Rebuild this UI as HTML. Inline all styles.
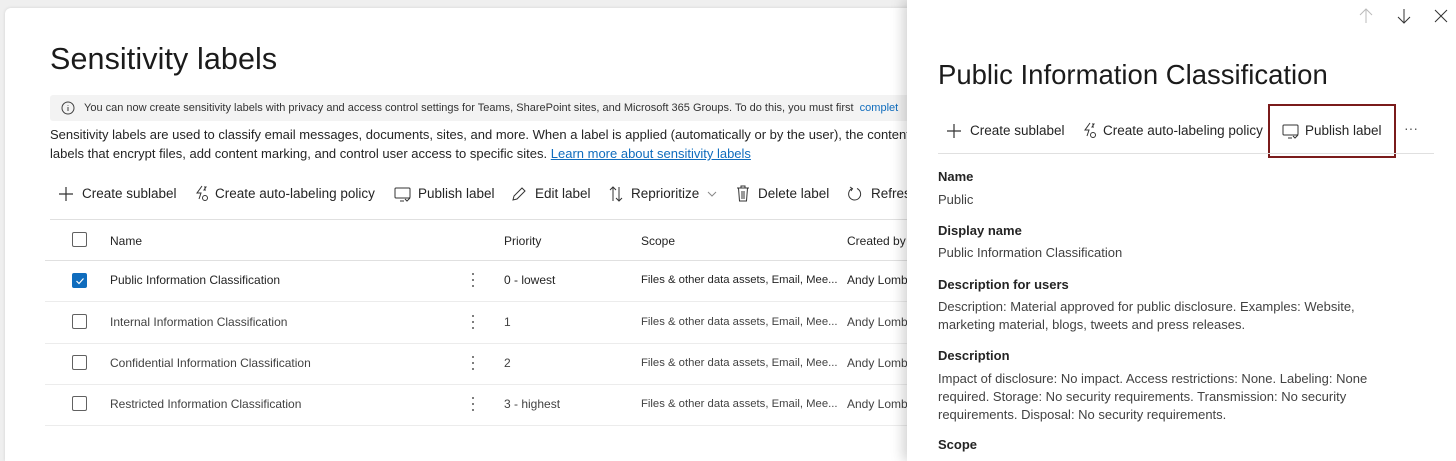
<!DOCTYPE html>
<html><head><meta charset="utf-8"><style>
*{margin:0;padding:0;box-sizing:border-box}
html,body{width:1456px;height:461px;overflow:hidden}
body{background:#efefef;font-family:"Liberation Sans",sans-serif;color:#242424;position:relative}
.a{position:absolute;white-space:nowrap}
.card{position:absolute;left:5px;top:8px;width:1000px;height:453px;background:#fff;border-radius:6px 6px 0 0;box-shadow:0 0 3px rgba(0,0,0,.12)}
.panel{position:absolute;left:907px;top:0;width:549px;height:461px;background:#fff;box-shadow:-4px 0 12px rgba(0,0,0,.18)}
.tb{font-size:13.5px;color:#242424}
.cb{position:absolute;width:15px;height:15px;border:1px solid #616161;border-radius:2px;background:#fff}
.cell{font-size:12px;color:#424242}
.sc{font-size:11.3px;margin-top:1px}
.hr{position:absolute;height:1px;background:#e0e0e0}
.k{position:absolute;width:2px;height:2px;background:#555;border-radius:1px}
svg{position:absolute}
.lbl{font-size:13px;font-weight:bold;color:#242424}
.val{font-size:13px;color:#424242}
</style></head><body>
<div class="card"></div>
<div class="a" style="left:50px;top:42px;font-size:30.5px;color:#1b1b1b;letter-spacing:0.1px">Sensitivity labels</div>
<div class="a" style="left:50px;top:95px;width:860px;height:26px;background:#f3f3f3;border-radius:3px"></div>
<svg style="left:61px;top:101px" width="14" height="14" viewBox="0 0 14 14"><circle cx="7" cy="7" r="6" fill="none" stroke="#424242"/><path d="M7 6v4M7 4v.6" stroke="#424242"/></svg>
<div class="a" style="left:84px;top:102px;font-size:11px;color:#333">You can now create sensitivity labels with privacy and access control settings for Teams, SharePoint sites, and Microsoft 365 Groups. To do this, you must first&nbsp; <span style="color:#0f6cbd">complet</span></div>
<div class="a" style="left:50px;top:125px;font-size:13px;color:#242424;line-height:19px;width:857px;overflow:hidden">Sensitivity labels are used to classify email messages, documents, sites, and more. When a label is applied (automatically or by the user), the content<br>labels that encrypt files, add content marking, and control user access to specific sites. <span style="color:#0f6cbd;text-decoration:underline">Learn more about sensitivity labels</span></div>
<!-- toolbar -->
<svg style="left:58px;top:186px" width="16" height="16"><path d="M8 1v14M1 8h14" stroke="#333" stroke-width="1.2"/></svg>
<div class="a tb" style="left:82px;top:186px">Create sublabel</div>
<svg style="left:193px;top:185px" width="16" height="18"><path d="M9 1L4 8h4l-2 6M11 2l2 0-2 3h2" stroke="#333" fill="none"/><circle cx="12" cy="13" r="2.5" fill="none" stroke="#333"/></svg>
<div class="a tb" style="left:215px;top:186px">Create auto-labeling policy</div>
<svg style="left:394px;top:187px" width="17" height="15"><rect x="1" y="1" width="15" height="10" rx="1" fill="none" stroke="#333"/><path d="M6 14h4M11 12l2 2 3-3" stroke="#333" fill="none"/></svg>
<div class="a tb" style="left:418px;top:186px">Publish label</div>
<svg style="left:511px;top:186px" width="16" height="16"><path d="M2 14l1-4 8-8 3 3-8 8z" stroke="#333" fill="none"/></svg>
<div class="a tb" style="left:535px;top:186px">Edit label</div>
<svg style="left:608px;top:185px" width="16" height="18"><path d="M5 16V2M2 5l3-3 3 3M11 2v14M8 13l3 3 3-3" stroke="#333" fill="none"/></svg>
<div class="a tb" style="left:631px;top:186px">Reprioritize</div>
<svg style="left:707px;top:190px" width="10" height="8"><path d="M1 2l4 4 4-4" stroke="#888" fill="none"/></svg>
<svg style="left:736px;top:185px" width="14" height="17"><path d="M1 3h12M5 3V1h4v2M2.5 3l1 13h7l1-13M6 6v8M8 6v8" stroke="#333" fill="none"/></svg>
<div class="a tb" style="left:758px;top:186px">Delete label</div>
<svg style="left:847px;top:186px" width="16" height="16"><path d="M10 2.5A6 6 0 1 1 5 2.6" stroke="#333" fill="none"/><path d="M3 1l2.5 1.6L4 5" stroke="#333" fill="none"/></svg>
<div class="a tb" style="left:871px;top:186px">Refres</div>
<div class="hr" style="left:50px;top:219px;width:857px"></div>
<!-- table -->
<div class="cb" style="left:72px;top:232px"></div>
<div class="a cell" style="left:110px;top:234px;color:#242424">Name</div>
<div class="a cell" style="left:504px;top:234px;color:#242424">Priority</div>
<div class="a cell" style="left:641px;top:234px;color:#242424">Scope</div>
<div class="a cell" style="left:847px;top:234px;color:#242424">Created by</div>
<div class="hr" style="left:45px;top:260px;width:862px"></div>

<div class="cb" style="left:72px;top:273px;background:#0f6cbd;border-color:#0f6cbd"></div>
<svg style="left:75px;top:276px" width="10" height="10"><path d="M1.5 5l2.5 2.5 4.5-5" stroke="#fff" fill="none" stroke-width="1.2"/></svg>
<div class="a cell" style="left:110px;top:273px;color:#242424">Public Information Classification</div>
<div class="k" style="left:472px;top:273px"></div><div class="k" style="left:472px;top:279px"></div><div class="k" style="left:472px;top:285px"></div>
<div class="a cell" style="left:504px;top:273px;color:#242424">0 - lowest</div>
<div class="a cell sc" style="left:641px;top:273px;color:#242424">Files &amp; other data assets, Email, Mee...</div>
<div class="a cell" style="left:847px;top:273px;color:#242424">Andy Lomba</div>
<div class="hr" style="left:45px;top:301px;width:862px;background:#ececec"></div>

<div class="cb" style="left:72px;top:314px"></div>
<div class="a cell" style="left:110px;top:315px">Internal Information Classification</div>
<div class="k" style="left:472px;top:315px"></div><div class="k" style="left:472px;top:321px"></div><div class="k" style="left:472px;top:327px"></div>
<div class="a cell" style="left:504px;top:315px">1</div>
<div class="a cell sc" style="left:641px;top:315px">Files &amp; other data assets, Email, Mee...</div>
<div class="a cell" style="left:847px;top:315px">Andy Lomba</div>
<div class="hr" style="left:45px;top:343px;width:862px;background:#ececec"></div>

<div class="cb" style="left:72px;top:355px"></div>
<div class="a cell" style="left:110px;top:356px">Confidential Information Classification</div>
<div class="k" style="left:472px;top:356px"></div><div class="k" style="left:472px;top:362px"></div><div class="k" style="left:472px;top:368px"></div>
<div class="a cell" style="left:504px;top:356px">2</div>
<div class="a cell sc" style="left:641px;top:356px">Files &amp; other data assets, Email, Mee...</div>
<div class="a cell" style="left:847px;top:356px">Andy Lomba</div>
<div class="hr" style="left:45px;top:384px;width:862px;background:#ececec"></div>

<div class="cb" style="left:72px;top:396px"></div>
<div class="a cell" style="left:110px;top:397px">Restricted Information Classification</div>
<div class="k" style="left:472px;top:397px"></div><div class="k" style="left:472px;top:403px"></div><div class="k" style="left:472px;top:409px"></div>
<div class="a cell" style="left:504px;top:397px">3 - highest</div>
<div class="a cell sc" style="left:641px;top:397px">Files &amp; other data assets, Email, Mee...</div>
<div class="a cell" style="left:847px;top:397px">Andy Lomba</div>
<div class="hr" style="left:45px;top:425px;width:862px;background:#ececec"></div>

<!-- panel -->
<div class="panel"></div>
<svg style="left:1358px;top:8px" width="16" height="16"><path d="M8 15V1M2 7l6-6 6 6" stroke="#bbb" fill="none"/></svg>
<svg style="left:1396px;top:8px" width="16" height="16"><path d="M8 1v14M2 9l6 6 6-6" stroke="#333" fill="none"/></svg>
<svg style="left:1434px;top:9px" width="14" height="14"><path d="M1 1l12 12M13 1L1 13" stroke="#333"/></svg>
<div class="a" style="left:938px;top:59px;font-size:27.5px;color:#1b1b1b">Public Information Classification</div>
<svg style="left:946px;top:123px" width="16" height="16"><path d="M8 1v14M1 8h14" stroke="#333" stroke-width="1.2"/></svg>
<div class="a tb" style="left:970px;top:123px">Create sublabel</div>
<svg style="left:1081px;top:122px" width="16" height="18"><path d="M9 1L4 8h4l-2 6M11 2l2 0-2 3h2" stroke="#333" fill="none"/><circle cx="12" cy="13" r="2.5" fill="none" stroke="#333"/></svg>
<div class="a tb" style="left:1103px;top:123px">Create auto-labeling policy</div>
<div class="a" style="left:1268px;top:104px;width:128px;height:54px;border:2px solid #7a1b1b"></div>
<svg style="left:1282px;top:124px" width="17" height="15"><rect x="1" y="1" width="15" height="10" rx="1" fill="none" stroke="#333"/><path d="M6 14h4M11 12l2 2 3-3" stroke="#333" fill="none"/></svg>
<div class="a tb" style="left:1305px;top:123px">Publish label</div>
<div class="a" style="left:1404px;top:120px;font-size:14px;color:#555">···</div>
<div class="hr" style="left:938px;top:153px;width:496px"></div>
<div class="a lbl" style="left:938px;top:169px">Name</div>
<div class="a val" style="left:938px;top:192px">Public</div>
<div class="a lbl" style="left:938px;top:223px">Display name</div>
<div class="a val" style="left:938px;top:245px">Public Information Classification</div>
<div class="a lbl" style="left:938px;top:277px">Description for users</div>
<div class="a val" style="left:938px;top:298px;line-height:18px">Description: Material approved for public disclosure. Examples: Website,<br>marketing material, blogs, tweets and press releases.</div>
<div class="a lbl" style="left:938px;top:348px">Description</div>
<div class="a val" style="left:938px;top:370px;line-height:18px">Impact of disclosure: No impact. Access restrictions: None. Labeling: None<br>required. Storage: No security requirements. Transmission: No security<br>requirements. Disposal: No security requirements.</div>
<div class="a lbl" style="left:938px;top:437px">Scope</div>
</body></html>
